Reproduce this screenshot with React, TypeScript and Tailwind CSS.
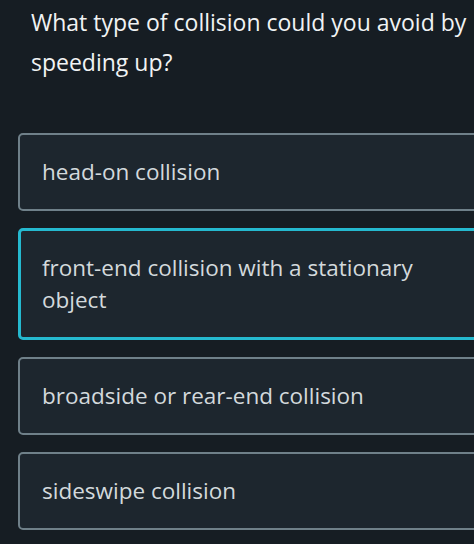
const options = [
  { text: "head-on collision", selected: false },
  { text: "front-end collision with a stationary object", selected: true },
  { text: "broadside or rear-end collision", selected: false },
  { text: "sideswipe collision", selected: false },
]

export default function App() {
  return (
    <div className="h-[544px] w-[474px] overflow-hidden bg-[#161d23] font-['Open_Sans','Noto_Sans',sans-serif]">
      {/* Question */}
      <h1 className="pl-[31px] pt-[2px] text-[23px] leading-[40px] text-[#f1f3f4] whitespace-nowrap">
        What type of collision could you avoid by
        <br />
        speeding up?
      </h1>

      {/* Options */}
      <div className="mt-[51px] flex flex-col gap-[17px] pl-[18px]">
        {options.map((o) => (
          <div
            key={o.text}
            className={
              o.selected
                ? "w-[480px] rounded-[5px] border-[3px] border-[#25b9cf] bg-[#1d262e] pl-[21px] pr-[60px] py-[21px]"
                : "w-[480px] rounded-[5px] border-2 border-[#6f8089] bg-[#1d262e] pl-[22px] pr-[60px] py-[21px]"
            }
          >
            <p className="max-w-[395px] text-[22.5px] leading-[32px] text-[#d3d9dc]">{o.text}</p>
          </div>
        ))}
      </div>
    </div>
  )
}
